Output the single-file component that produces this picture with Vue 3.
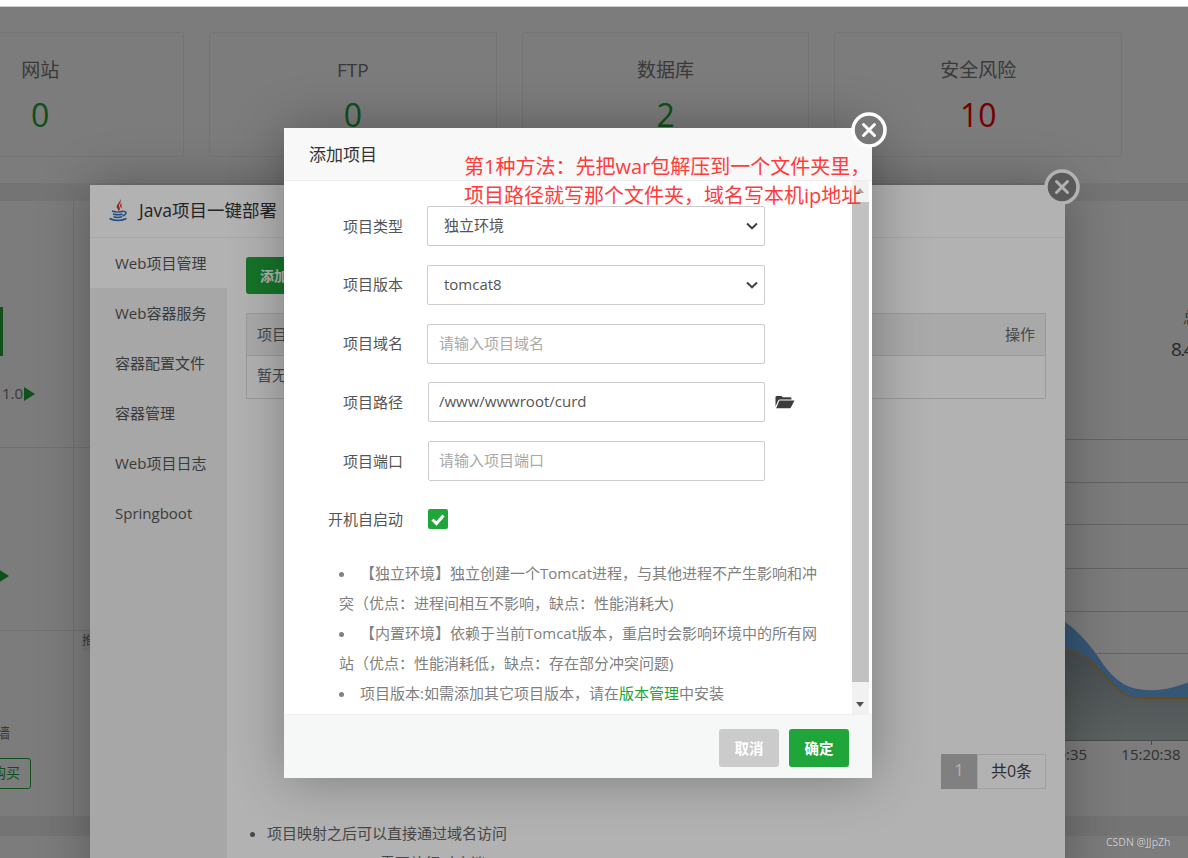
<script setup>
const stats = [
  { title: '网站', value: 0 },
  { title: 'FTP', value: 0 },
  { title: '数据库', value: 2 },
  { title: '安全风险', value: 10, danger: true },
]
const navItems = ['Web项目管理', 'Web容器服务', '容器配置文件', '容器管理', 'Web项目日志', 'Springboot']
</script>

<template>
  <div class="page">
    <div class="dash">
      <div class="stats">
        <div v-for="s in stats" :key="s.title" class="stat">
          <div class="stat-title">{{ s.title }}</div>
          <div class="stat-value" :class="{ danger: s.danger }">{{ s.value }}</div>
        </div>
      </div>
      <div class="band"></div>
      <div class="monitor">
        <div class="mon-left">
          <div class="mon-cell one">
            <div class="green-block"></div>
            <div class="ver">1.0<span class="tri"></span></div>
          </div>
          <div class="mon-cell two"><span class="tri"></span></div>
          <div class="mon-cell three">
            <div class="shop">墙</div>
            <div class="buy">购买</div>
          </div>
        </div>
        <div class="mon-mid">
          <div class="mid-cell first"></div>
          <div class="mid-cell second"></div>
          <div class="mon-tag">推荐</div>
        </div>
        <div class="mon-right">
          <div class="net">
            <div class="net-title">总发送</div>
            <div class="net-value">8.4 KB</div>
          </div>
          <svg class="chart" width="188" height="350" viewBox="0 0 188 350">
            <defs>
              <linearGradient id="flow" x1="0" y1="0" x2="0" y2="1">
                <stop offset="0" stop-color="#8b979e" />
                <stop offset="1" stop-color="#bcc6c6" />
              </linearGradient>
            </defs>
            <g stroke="#cfcfcf" stroke-width="1">
              <line x1="0" y1="34.500" x2="188" y2="34.500" />
              <line x1="0" y1="77.500" x2="188" y2="77.500" />
              <line x1="0" y1="119.500" x2="188" y2="119.500" />
              <line x1="0" y1="163.500" x2="188" y2="163.500" />
              <line x1="0" y1="206.500" x2="188" y2="206.500" />
              <line x1="0" y1="248.500" x2="188" y2="248.500" />
              <line x1="0" y1="291.500" x2="188" y2="291.500" />
            </g>
            <path d="M0 195 L65 217 C78 226 88 238 97 250 C106 264 116 277 130 282 C142 286 158 286 170 283 C178 281 184 279 188 277.500 L188 335 L0 335 Z" fill="#6fb0f0" />
            <path d="M0 230 L65 245.500 C78 246 86 251 94 259 C104 271 114 283 124 289 C132 293 138 293.600 148 293.600 L188 293.600 L188 335 L0 335 Z" fill="url(#flow)" />
            <path d="M65 245.500 C78 246 86 251 94 259 C104 271 114 283 124 289 C132 293 138 293.600 148 293.600 L188 293.600" fill="none" stroke="#e0982a" stroke-width="1.300" />
            <line x1="0" y1="335.500" x2="188" y2="335.500" stroke="#999" />
            <line x1="151.500" y1="335" x2="151.500" y2="340" stroke="#999" />
            <text x="57.500" y="355" class="tick" text-anchor="middle">15:20:35</text>
            <text x="151" y="355" class="tick" text-anchor="middle">15:20:38</text>
          </svg>
        </div>
      </div>
      <div class="band bottom"></div>
    </div>

    <div class="shade"></div>

    <section class="java-win">
      <svg class="close" width="36" height="36" viewBox="0 0 36 36">
        <circle cx="18" cy="18" r="16" fill="#808080" stroke="#fff" stroke-width="3.500" />
        <path d="M12.500 12.500 L23.500 23.500 M23.500 12.500 L12.500 23.500" stroke="#fff" stroke-width="3" stroke-linecap="round" />
      </svg>
      <header class="java-head">
        <svg class="java-logo" width="22" height="24" viewBox="0 0 22 24">
          <path d="M12.500 0.500 C15 4 8 6.500 10 10 C11 11.500 11.800 12 11 13.500 C15.500 10.500 10.500 8.500 12.500 6 C13.800 4.500 14.500 2.500 12.500 0.500 Z" fill="#d8352a" />
          <path d="M15 5 C11.500 7 13.500 8.500 14.300 10.500 C15.500 9 13.500 7.500 15 5 Z" fill="#d8352a" />
          <g fill="none" stroke="#2a6cc0" stroke-width="1.500">
            <path d="M5 13 C8 14.200 13.500 14.200 16.500 13" />
            <path d="M6 16 C9 17 13 17 15.500 16" />
            <path d="M6.500 18.800 C9 19.600 12.500 19.600 15 18.800" />
            <path d="M2.500 20.500 C7 23 15 23 19.500 20.500" />
            <path d="M16.500 13.500 C20 13 20 16.500 15.500 18" />
          </g>
        </svg>
        <span class="java-title">Java项目一键部署</span>
      </header>
      <div class="java-body">
        <nav class="java-nav">
          <div v-for="(n, i) in navItems" :key="n" class="nav-item" :class="{ on: i === 0 }">{{ n }}</div>
        </nav>
        <div class="java-main">
          <button class="add-btn">添加项目</button>
          <table class="grid">
            <thead>
              <tr><th>项目名称</th><th class="op">操作</th></tr>
            </thead>
            <tbody>
              <tr><td colspan="2">暂无数据</td></tr>
            </tbody>
          </table>
          <div class="pager">
            <span class="pg-now">1</span><span class="pg-total">共0条</span>
          </div>
          <ul class="java-tips">
            <li>项目映射之后可以直接通过域名访问</li>
          </ul>
          <p class="tip-more">需要放行对应端口</p>
        </div>
      </div>
    </section>

    <div class="shade"></div>

    <section class="add-win">
      <svg class="close" width="36" height="36" viewBox="0 0 36 36">
        <circle cx="18" cy="18" r="16" fill="#787878" stroke="#fff" stroke-width="3.500" />
        <path d="M12.500 12.500 L23.500 23.500 M23.500 12.500 L12.500 23.500" stroke="#fff" stroke-width="3" stroke-linecap="round" />
      </svg>
      <header class="add-head">添加项目</header>
      <div class="add-body">
        <div class="add-form">
          <div class="row">
            <label>项目类型</label>
            <select class="ctl sel"><option>独立环境</option></select>
          </div>
          <div class="row">
            <label>项目版本</label>
            <select class="ctl sel"><option>tomcat8</option></select>
          </div>
          <div class="row">
            <label>项目域名</label>
            <input class="ctl" placeholder="请输入项目域名" />
          </div>
          <div class="row">
            <label>项目路径</label>
            <input class="ctl shift" value="/www/wwwroot/curd" />
            <svg class="folder" width="20" height="14" viewBox="0 0 20 16" preserveAspectRatio="none">
              <path d="M0.500 13 L0.500 2.500 Q0.500 1 2 1 L6 1 Q7.200 1 7.500 2.500 L15 2.500 Q16.500 2.500 16.500 4 L16.500 5 L5 5 Q3.800 5 3.300 6 Z" fill="#3c3c3c" />
              <path d="M4.300 6.300 L19.500 6.300 L16 14 Q15.600 15 14.500 15 L1.200 15 Z" fill="#3c3c3c" />
            </svg>
          </div>
          <div class="row">
            <label>项目端口</label>
            <input class="ctl shift" placeholder="请输入项目端口" />
          </div>
          <div class="row">
            <label>开机自启动</label>
            <span class="check">
              <svg width="20" height="20" viewBox="0 0 20 20">
                <path d="M4.500 10.500 L8.500 14.500 L15.500 6.500" fill="none" stroke="#fff" stroke-width="3" />
              </svg>
            </span>
          </div>
          <ul class="tips">
            <li>【独立环境】独立创建一个Tomcat进程，与其他进程不产生影响和冲突（优点：进程间相互不影响，缺点：性能消耗大)</li>
            <li>【内置环境】依赖于当前Tomcat版本，重启时会影响环境中的所有网站（优点：性能消耗低，缺点：存在部分冲突问题)</li>
            <li>项目版本:如需添加其它项目版本，请在<span class="link">版本管理</span>中安装</li>
          </ul>
        </div>
        <div class="scroll">
          <span class="arrow up"></span>
          <span class="thumb"></span>
          <span class="arrow down"></span>
        </div>
      </div>
      <footer class="add-foot">
        <button class="btn gray">取消</button>
        <button class="btn green">确定</button>
      </footer>
      <div class="note">第1种方法：先把war包解压到一个文件夹里，<br />项目路径就写那个文件夹，域名写本机ip地址</div>
    </section>

    <div class="strip"></div>
    <div class="mark">CSDN @JJpZh</div>
  </div>
</template>

<style>
html, body { margin: 0; background: #fff; }
</style>

<style scoped>
.page {
  position: relative;
  width: 1188px;
  height: 858px;
  overflow: hidden;
  background: #fff;
  font-family: "Open Sans", "Noto Sans CJK SC", sans-serif;
  font-size: 15px;
  color: #555;
}
.dash {
  padding-top: 32px;
  background: #fff;
}
.stats {
  display: flex;
  gap: 25px;
  margin-left: -103.700px;
  height: 125px;
  margin-bottom: 26px;
}
.stat {
  width: 287.700px;
  box-sizing: border-box;
  border: 1px solid #f1f1f1;
  border-radius: 2px;
  text-align: center;
  flex: none;
}
.stat-title { margin-top: 22px; font-size: 19px; line-height: 30px; color: #777; }
.stat-value { margin-top: 8px; font-size: 32px; line-height: 44px; color: #20a53a; }
.stat-value.danger { color: #e00; }
.band { height: 18px; background: #efefef; }
.band.bottom { height: 20px; }
.monitor {
  display: flex;
  height: 615px;
  background: #fff;
}
.mon-left {
  width: 73px;
  flex: none;
  border-right: 1px solid #e8e8ee;
}
.mon-cell { border-bottom: 1px solid #e8e8ee; box-sizing: border-box; }
.mon-cell.one { height: 247px; padding-top: 106px; }
.mon-cell.two { height: 183px; padding-top: 117px; }
.mon-cell.three { height: 185px; padding-top: 92px; border-bottom: 0; }
.green-block { width: 3px; height: 49px; background: #20a53a; }
.ver { margin-top: 26px; margin-left: 2px; font-size: 15px; line-height: 22px; color: #777; }
.tri {
  display: inline-block;
  border-left: 11px solid #20a53a;
  border-top: 7px solid transparent;
  border-bottom: 7px solid transparent;
  vertical-align: -2px;
  margin-left: 1px;
}
.two .tri { margin-left: -2px; }
.shop { margin-left: -4px; font-size: 14px; line-height: 20px; color: #777; }
.buy {
  width: 68px;
  height: 31px;
  margin-left: -37px;
  margin-top: 15px;
  box-sizing: border-box;
  border: 1px solid #20a53a;
  border-radius: 3px;
  color: #20a53a;
  text-align: right;
  padding-right: 10px;
  line-height: 28px;
  font-size: 14px;
}
.mon-mid { flex: 1; min-width: 0; }
.mid-cell { border-bottom: 1px solid #e8e8ee; box-sizing: border-box; }
.mid-cell.first { height: 247px; }
.mid-cell.second { height: 183px; }
.mon-tag {
  margin-left: 8px;
  width: 60px;
  font-size: 12px;
  line-height: 20px;
  color: #777;
  background: #f7f7f7;
}
.mon-right { width: 188px; flex: none; }
.net { height: 204px; white-space: nowrap; }
.net-title { padding-top: 106px; padding-left: 183px; font-size: 15px; line-height: 20px; color: #777; }
.net-value { padding-left: 171px; font-size: 19px; line-height: 30px; margin-top: 7px; letter-spacing: -1.500px; color: #555; }
.chart { display: block; overflow: visible; }
.tick { font-size: 15px; fill: #666; }
.shade {
  position: absolute;
  inset: 0;
  background: rgba(0, 0, 0, 0.3);
}
.close {
  position: absolute;
  right: -15px;
  top: -16px;
}
.java-win {
  position: absolute;
  left: 90px;
  top: 185px;
  width: 975px;
  height: 700px;
  background: #fff;
  box-shadow: 1px 1px 50px rgba(0, 0, 0, 0.3);
}
.java-head {
  display: flex;
  align-items: center;
  height: 52px;
  padding-left: 17px;
  background: #fff;
  border-bottom: 1px solid #eee;
  color: #333;
  gap: 10px;
}
.java-logo { margin-bottom: 2px; }
.java-title { font-size: 17.500px; padding-bottom: 3px; }
.java-body { display: flex; height: 647px; }
.java-nav { width: 137px; flex: none; background: #f0f0f0; }
.nav-item {
  height: 50px;
  line-height: 50px;
  padding-left: 25px;
  color: #555;
}
.nav-item.on { background: #fff; }
.java-main { flex: 1; padding: 19px 19px 0; min-width: 0; }
.add-btn {
  display: block;
  height: 37px;
  padding: 0 14px 2px;
  border: 0;
  border-radius: 3px;
  background: #20a53a;
  color: #fff;
  font: bold 14px "Open Sans", "Noto Sans CJK SC", sans-serif;
}
.grid {
  width: 800px;
  margin-top: 19px;
  border-collapse: collapse;
  border: 1px solid #ddd;
}
.grid th, .grid td {
  font-weight: normal;
  text-align: left;
  color: #666;
  border-bottom: 1px solid #ddd;
  box-sizing: border-box;
}
.grid th { height: 42px; padding: 0 10px 3px; background: #f2f2f2; }
.grid td { height: 43px; padding: 0 10px 5px; }
.grid th.op { text-align: right; }
.pager {
  display: flex;
  justify-content: flex-end;
  margin-top: 355px;
  height: 35px;
  line-height: 32px;
}
.pg-now { width: 36px; background: #b8b8b8; color: #fff; text-align: center; font-size: 16px; }
.pg-total { width: 67px; border: 1px solid #e6e6e6; text-align: center; color: #444; font-size: 16px; }
.java-tips {
  margin: 30px 0 0;
  padding: 0 0 0 21px;
  line-height: 29px;
  color: #666;
}
.tip-more {
  margin: 1px 0 0;
  padding-left: 134px;
  line-height: 29px;
  color: #666;
}
.add-win {
  position: absolute;
  left: 284px;
  top: 128px;
  width: 588px;
  height: 650px;
  background: #fff;
  box-shadow: 1px 1px 50px rgba(0, 0, 0, 0.3);
  display: flex;
  flex-direction: column;
}
.add-head {
  height: 52px;
  line-height: 54px;
  padding-left: 25px;
  background: #f8f8f8;
  border-bottom: 1px solid #eee;
  font-size: 17px;
  color: #333;
  flex: none;
}
.add-body { flex: 1; display: flex; min-height: 0; }
.add-form { width: 567px; flex: none; padding-top: 25px; box-sizing: border-box; }
.row {
  display: flex;
  align-items: center;
  height: 40px;
  margin-bottom: 18.750px;
}
.row label {
  width: 119px;
  margin-right: 24px;
  padding-bottom: 2px;
  text-align: right;
  flex: none;
  color: #555;
}
.ctl {
  width: 338px;
  height: 40px;
  box-sizing: border-box;
  border: 1px solid #ccc;
  border-radius: 2px;
  padding: 0 11px 2px;
  background: #fff;
  color: #555;
  font: 15px "Open Sans", "Noto Sans CJK SC", sans-serif;
  outline: none;
}
.ctl::placeholder { color: #a9a9a9; }
.sel {
  appearance: none;
  padding-left: 16px;
  background: #fff url("data:image/svg+xml,%3Csvg xmlns='http://www.w3.org/2000/svg' width='12' height='8' viewBox='0 0 12 8'%3E%3Cpath d='M1 1.500 L6 6.300 L11 1.500' fill='none' stroke='%23444' stroke-width='2'/%3E%3C/svg%3E") no-repeat right 6px center;
}
.shift { width: 337px; margin-left: 1px; padding-left: 10px; }
.folder { margin-left: 10px; }
.check {
  display: block;
  width: 20px;
  height: 20px;
  margin-left: 1px;
  margin-top: -2px;
  border-radius: 2px;
  background: #20a53a;
}
.check svg { display: block; }
.tips {
  margin: -1px 0 0;
  padding: 0 0 0 55px;
  width: 482px;
  box-sizing: content-box;
  list-style-position: inside;
  line-height: 30px;
  color: #808080;
}
.tips li::marker { color: #808080; }
.link { color: #20a53a; }
.scroll {
  position: relative;
  width: 17px;
  margin-left: 1px;
  background: #f1f1f1;
}
.thumb {
  display: block;
  margin-top: 21px;
  height: 480px;
  background: #c1c1c1;
}
.arrow {
  position: absolute;
  left: 4px;
  border-left: 4.500px solid transparent;
  border-right: 4.500px solid transparent;
}
.arrow.up { top: 7px; border-bottom: 5px solid #a3a3a3; }
.arrow.down { bottom: 7px; border-top: 5px solid #505050; }
.add-foot {
  flex: none;
  height: 64px;
  box-sizing: border-box;
  padding: 14px 23px 0 0;
  background: #f6f8f8;
  border-top: 1px solid #eef0f0;
  display: flex;
  justify-content: flex-end;
  gap: 10px;
}
.btn {
  width: 60px;
  height: 38px;
  padding: 0 0 2px;
  border: 0;
  border-radius: 3px;
  color: #fff;
  font: bold 14.500px "Open Sans", "Noto Sans CJK SC", sans-serif;
}
.btn.gray { background: #cbcbcb; }
.btn.green { background: #20a53a; }
.note {
  position: absolute;
  left: 180px;
  top: 24px;
  font-size: 20px;
  line-height: 29px;
  color: #ff3b3b;
  white-space: nowrap;
}
.strip {
  position: absolute;
  left: 0;
  right: 0;
  top: 0;
  height: 6px;
  background: #fff;
  border-bottom: 1px solid #ccc;
}
.mark {
  position: absolute;
  left: 1106px;
  top: 835px;
  font-size: 10.500px;
  line-height: 14px;
  color: rgba(255, 255, 255, 0.75);
  text-shadow: 0 0 1px rgba(0, 0, 0, 0.4);
}
</style>
